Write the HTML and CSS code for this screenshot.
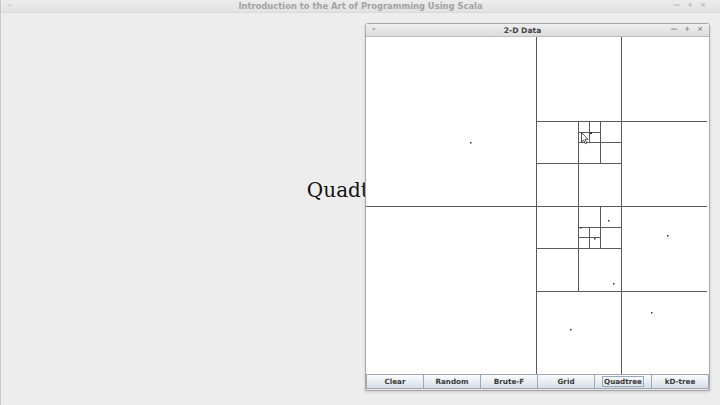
FILE: index.html
```html
<!DOCTYPE html>
<html>
<head>
<meta charset="utf-8">
<link rel="stylesheet" href="styles.css">
</head>
<body>
<div class="main-window">
  <div class="titlebar main-title">
    <span class="tb-left">&#8211;</span>
    <span class="tb-text">Introduction to the Art of Programming Using Scala</span>
    <span class="tb-right"><span>&#8212;</span><span>+</span><span>&#215;</span></span>
  </div>
  <div class="main-content">
    <div class="big-label">Quadtree</div>
    <div class="data-window">
      <div class="titlebar data-title">
        <span class="tb-left">&#8211;</span>
        <span class="tb-text">2-D Data</span>
        <span class="tb-right"><span>&#8212;</span><span>+</span><span>&#215;</span></span>
      </div>
      <div class="canvas">
        <svg width="341" height="337" viewBox="0 0 341 337" class="plot">
          <g stroke="#5a5a5a" stroke-width="1" fill="none">
            <line x1="170.5" y1="0" x2="170.5" y2="337"/>
            <line x1="0" y1="169.5" x2="341" y2="169.5"/>
            <line x1="255.5" y1="0" x2="255.5" y2="337"/>
            <line x1="170" y1="84.5" x2="341" y2="84.5"/>
            <line x1="170" y1="254.5" x2="341" y2="254.5"/>
            <line x1="212.5" y1="84" x2="212.5" y2="254"/>
            <line x1="170" y1="126.5" x2="256" y2="126.5"/>
            <line x1="170" y1="211.5" x2="256" y2="211.5"/>
            <line x1="234.5" y1="84" x2="234.5" y2="126"/>
            <line x1="234.5" y1="169" x2="234.5" y2="211"/>
            <line x1="212" y1="105.5" x2="256" y2="105.5"/>
            <line x1="212" y1="190.5" x2="256" y2="190.5"/>
            <line x1="223.5" y1="84" x2="223.5" y2="105"/>
            <line x1="223.5" y1="190" x2="223.5" y2="211"/>
            <line x1="212" y1="95.5" x2="234" y2="95.5"/>
            <line x1="212" y1="200.5" x2="234" y2="200.5"/>
          </g>
          <g fill="#333">
            <rect x="104" y="105" width="1.5" height="1.5"/>
            <rect x="224" y="95" width="2" height="2"/>
            <rect x="242" y="183" width="1.5" height="1.5"/>
            <rect x="214" y="190" width="1.5" height="1.5"/>
            <rect x="228" y="201" width="1.5" height="1.5"/>
            <rect x="301" y="198" width="1.5" height="1.5"/>
            <rect x="247" y="246" width="1.5" height="1.5"/>
            <rect x="204" y="292" width="1.5" height="1.5"/>
            <rect x="285" y="275" width="1.5" height="1.5"/>
          </g>
          <path d="M215.5 95.5 L215.5 105 L217.6 103 L219.3 106.8 L220.8 106.1 L219.2 102.4 L222 102.3 Z" fill="#fff" stroke="#222" stroke-width="0.8" stroke-linejoin="round"/>
        </svg>
      </div>
      <div class="buttons">
        <div class="btn"><span>Clear</span></div>
        <div class="btn"><span>Random</span></div>
        <div class="btn"><span>Brute-F</span></div>
        <div class="btn"><span>Grid</span></div>
        <div class="btn focused"><span>Quadtree</span></div>
        <div class="btn"><span>kD-tree</span></div>
      </div>
    </div>
  </div>
</div>
</body>
</html>
```
FILE: styles.css
```css
html, body {
  margin: 0;
  padding: 0;
  width: 720px;
  height: 405px;
  overflow: hidden;
  background: #ececec;
}
.main-window {
  width: 720px;
  height: 405px;
  display: flex;
  flex-direction: column;
  box-sizing: border-box;
  border-left: 1px solid #c8c8c8;
  background: #eeedee;
}
.titlebar {
  display: flex;
  align-items: center;
  position: relative;
  font-family: "DejaVu Sans", sans-serif;
  font-weight: bold;
  box-sizing: border-box;
}
.main-title {
  height: 13px;
  font-size: 8.4px;
  background: linear-gradient(#ececec, #e2e2e2);
  border-bottom: 1px solid #dadada;
  color: #a3a3a3;
}
.tb-left {
  position: absolute;
  left: 7px;
  top: 1px;
  font-size: 7px;
  color: #b5b5b5;
}
.tb-text {
  flex: 1;
  text-align: center;
}
.tb-right {
  position: absolute;
  right: 14px;
  top: 1px;
  display: flex;
  gap: 7px;
  color: #b5b5b5;
  font-size: 7px;
}
.main-content {
  flex: 1;
  position: relative;
  display: flex;
  justify-content: center;
  padding-top: 165px;
  box-sizing: border-box;
}
.big-label {
  font-family: "DejaVu Serif", serif;
  font-size: 20px;
  color: #111;
  height: 24px;
  margin-left: -12px;
}
.data-window {
  position: absolute;
  left: 364px;
  top: 10px;
  width: 343px;
  display: flex;
  flex-direction: column;
  border: 1px solid #a8a8a8;
  border-radius: 3px 3px 0 0;
  background: #e9e9e9;
  box-shadow: 0 1px 3px rgba(0,0,0,0.15);
}
.data-title {
  height: 13px;
  font-size: 7.6px;
  background: linear-gradient(#eeeeee, #dcdcdc);
  color: #444;
  border-bottom: 1px solid #bcbcbc;
}
.data-title .tb-text {
  padding-right: 30px;
}
.data-title .tb-left {
  left: 6px;
  color: #777;
}
.data-title .tb-right {
  right: 6px;
  color: #888;
}
.canvas {
  height: 337px;
  background: #fff;
}
.plot {
  display: block;
}
.buttons {
  display: flex;
  height: 15px;
  margin-bottom: 1px;
}
.btn {
  flex: 1;
  display: flex;
  align-items: center;
  justify-content: center;
  font-family: "DejaVu Sans", sans-serif;
  font-weight: bold;
  font-size: 7.2px;
  color: #3a3a3a;
  background: linear-gradient(#fbfcfd, #e9eef3 50%, #d6dde6);
  border: 1px solid #9ea8b3;
  border-left-width: 0;
  box-sizing: border-box;
}
.btn:first-child {
  border-left-width: 1px;
}
.focused span {
  outline: 1px solid #9aa9b9;
  outline-offset: 0px;
  padding: 0 1px;
}
```
